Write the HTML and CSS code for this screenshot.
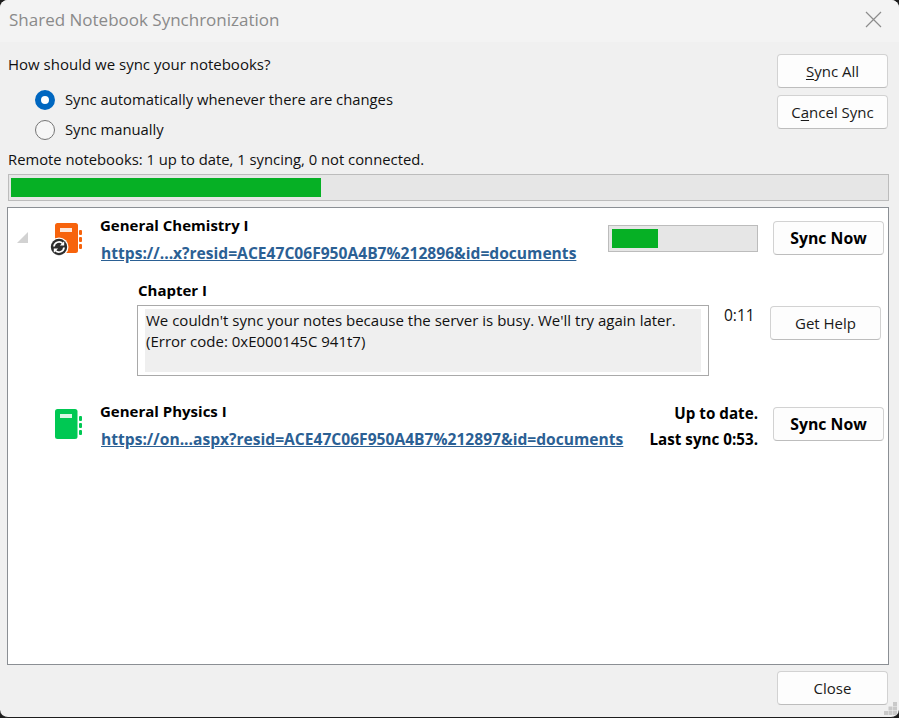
FILE: index.html
```html
<!DOCTYPE html>
<html lang="en">
<head>
<meta charset="utf-8">
<title>Shared Notebook Synchronization</title>
<link rel="stylesheet" href="styles.css">
</head>
<body>
<div class="dialog">
  <header class="titlebar">
    <h1 class="title">Shared Notebook Synchronization</h1>
    <svg class="close-x" width="17" height="17" viewBox="0 0 17 17" aria-label="Close"><path d="M1 1 16 16M16 1 1 16" stroke="#8c8c8c" stroke-width="1.2" fill="none"/></svg>
  </header>
  <section class="top">
    <div class="options">
      <p class="line question">How should we sync your notebooks?</p>
      <div class="radios">
        <div class="radio-row"><span class="radio on"></span><span class="radio-label">Sync automatically whenever there are changes</span></div>
        <div class="radio-row"><span class="radio"></span><span class="radio-label">Sync manually</span></div>
      </div>
      <p class="line remote">Remote notebooks: 1 up to date, 1 syncing, 0 not connected.</p>
    </div>
    <div class="top-actions">
      <button class="btn"><u>S</u>ync All</button>
      <button class="btn">C<u>a</u>ncel Sync</button>
    </div>
  </section>
  <div class="progress overall"><div class="fill fill-overall"></div></div>
  <main class="panel">
    <div class="nb">
      <span class="caret-slot"><svg width="11" height="11" viewBox="0 0 11 11"><path d="M11 0V11H0Z" fill="#d2d2d2"/></svg></span>
      <svg class="nb-icon" width="36" height="36" viewBox="0 0 36 36">
        <rect x="6" y="2" width="23" height="30" rx="2.5" fill="#f7630c"/>
        <rect x="11" y="7" width="12" height="4" fill="#fff" opacity=".85"/>
        <rect x="30" y="9" width="3" height="5" rx="1" fill="#f7630c"/>
        <rect x="30" y="16" width="3" height="5" rx="1" fill="#f7630c"/>
        <rect x="30" y="23" width="3" height="5" rx="1" fill="#f7630c"/>
        <circle cx="10" cy="26" r="9.5" fill="#fff"/>
        <circle cx="10" cy="26" r="8.2" fill="#2d2d2d"/>
        <path d="M5 25.500a5 5 0 0 1 8.600-3M15 26.500a5 5 0 0 1-8.600 3" stroke="#fff" stroke-width="1.800" fill="none"/>
        <path d="M15.200 20.200v4.300h-4.300ZM4.800 31.800v-4.300h4.300Z" fill="#fff"/>
      </svg>
      <div class="nb-text">
        <div class="nb-name">General Chemistry I</div>
        <a class="nb-link" href="#">https://...x?resid=ACE47C06F950A4B7%212896&amp;id=documents</a>
      </div>
      <div class="nb-status"><div class="progress small"><div class="fill fill-small"></div></div></div>
      <button class="btn strong nb-btn">Sync Now</button>
    </div>
    <div class="section">
      <div class="section-name">Chapter I</div>
      <div class="errbox"><div class="errtext">We couldn't sync your notes because the server is busy. We'll try again later.<br>(Error code: 0xE000145C 941t7)</div></div>
      <div class="time">0:11</div>
      <button class="btn help">Get Help</button>
    </div>
    <div class="nb second">
      <span class="caret-slot"></span>
      <svg class="nb-icon" width="36" height="36" viewBox="0 0 36 36">
        <rect x="6" y="2" width="22.500" height="30" rx="2.500" fill="#00c853"/>
        <rect x="11" y="7" width="12" height="4" fill="#fff" opacity=".85"/>
        <rect x="30" y="9" width="3" height="5" rx="1" fill="#00c853"/>
        <rect x="30" y="16" width="3" height="5" rx="1" fill="#00c853"/>
        <rect x="30" y="23" width="3" height="5" rx="1" fill="#00c853"/>
      </svg>
      <div class="nb-text">
        <div class="nb-name">General Physics I</div>
        <a class="nb-link" href="#">https://on...aspx?resid=ACE47C06F950A4B7%212897&amp;id=documents</a>
      </div>
      <div class="nb-status text"><div>Up to date.</div><div>Last sync 0:53.</div></div>
      <button class="btn strong nb-btn">Sync Now</button>
    </div>
  </main>
  <footer class="footer"><button class="btn">Close</button></footer>
  <svg class="grip" width="13" height="13" viewBox="0 0 13 13"><path d="M9 0h4v4H9ZM4.500 4.500h4v4h-4ZM9 4.500h4v4H9ZM0 9h4v4H0ZM4.500 9h4v4h-4ZM9 9h4v4H9Z" fill="#c9c9c9"/></svg>
</div>
</body>
</html>
```
FILE: styles.css
```css
* { box-sizing: border-box; }
html, body { margin: 0; height: 100%; background: #1d1d1d; overflow: hidden; }
body { font-family: "Open Sans", "Noto Sans", "Liberation Sans", sans-serif; font-size: 14.8px; color: #111; }
.dialog { position: relative; width: 899px; height: 718px; display: flex; flex-direction: column; background: #f0f0f0; border-radius: 8px; border-bottom: 1px solid #1d1d1d; overflow: hidden; }
.titlebar { height: 42px; flex: none; display: flex; align-items: center; justify-content: space-between; padding: 0 17px 3px 9px; background: #f3f3f3; }
.title { margin: 0; font-size: 17px; font-weight: 400; color: #8a8a8a; }
.top { display: flex; justify-content: space-between; padding: 12px 11px 0 8px; flex: none; }
.line { margin: 0; height: 20px; line-height: 20px; }
.question { font-size: 15px; }
.radios { display: flex; flex-direction: column; gap: 10px; margin-top: 16px; padding-left: 27px; }
.radio-row { display: flex; align-items: flex-start; gap: 10px; height: 20px; }
.radio-label { line-height: 18px; }
.radio { width: 20px; height: 20px; border-radius: 50%; border: 1px solid #757575; background: #f6f6f6; flex: none; }
.radio.on { border: 6px solid #0067c0; background: #fff; }
.remote { margin-top: 10px; line-height: 18px; }
.top-actions { display: flex; flex-direction: column; gap: 7px; }
.btn { width: 111px; height: 34px; padding: 0; font: inherit; font-size: 15px; color: #1a1a1a; background: #fdfdfd; border: 1px solid #d2d2d2; border-bottom-color: #bdbdbd; border-radius: 4px; }
.btn u { text-underline-offset: 2px; }
.strong { font-weight: 700; font-size: 15.8px; color: #000; }
.progress { background: #e6e6e6; border: 1px solid #bcbcbc; padding: 3px; }
.fill { height: 100%; background: #06b025; }
.overall { height: 27px; margin: 4px 10px 0 8px; flex: none; padding: 3px 2px; }
.fill-overall { width: 310px; }
.small { width: 150px; height: 27px; margin-top: 12px; }
.fill-small { width: 46px; }
.panel { flex: 1; margin: 6px 10px 0 7px; background: #fff; border: 1px solid #8b8f94; padding-top: 5px; min-height: 0; }
.nb { display: flex; align-items: flex-start; padding: 0 4px 0 9px; }
.second { margin-top: 23px; }
.caret-slot { width: 11px; height: 11px; margin-top: 19px; flex: none; }
.caret-slot svg { display: block; }
.nb-icon { flex: none; margin: 8px 0 0 21px; }
.nb-text { margin-left: 15px; flex: 1; min-width: 0; font-weight: 700; font-size: 15px; }
.nb-name { height: 26px; line-height: 24px; color: #000; }
.nb-link { display: block; margin: 1px 0 0 1px; height: 26px; line-height: 26px; font-size: 15.6px; color: #2b6094; text-decoration: underline; white-space: nowrap; }
.nb-status { margin-right: 15px; flex: none; }
.nb-status.text { text-align: right; font-weight: 700; font-size: 15.2px; color: #000; }
.nb-status.text div { height: 26px; line-height: 28px; }
.nb-btn { margin-top: 8px; flex: none; }
.section { display: grid; grid-template-columns: 572px 46px 115px; grid-template-rows: 20px auto; row-gap: 4px; margin: 15px 0 0 129px; }
.section-name { grid-column: 1 / -1; font-weight: 700; font-size: 15px; line-height: 18px; color: #000; padding-left: 1px; }
.errbox { height: 71px; padding: 3px 7px; background: #fff; border: 1px solid #a9a9a9; }
.errtext { height: 100%; background: #efefef; font-size: 15px; line-height: 21px; padding: 1px; }
.time { margin: 1px 0 0 15px; font-size: 15.5px; line-height: 18px; }
.help { margin: 1px 0 0 15px; }
.footer { flex: none; display: flex; justify-content: flex-end; padding: 6px 11px 12px; }
.grip { position: absolute; right: 2px; bottom: 2px; }
.close-x { display: block; }
```
